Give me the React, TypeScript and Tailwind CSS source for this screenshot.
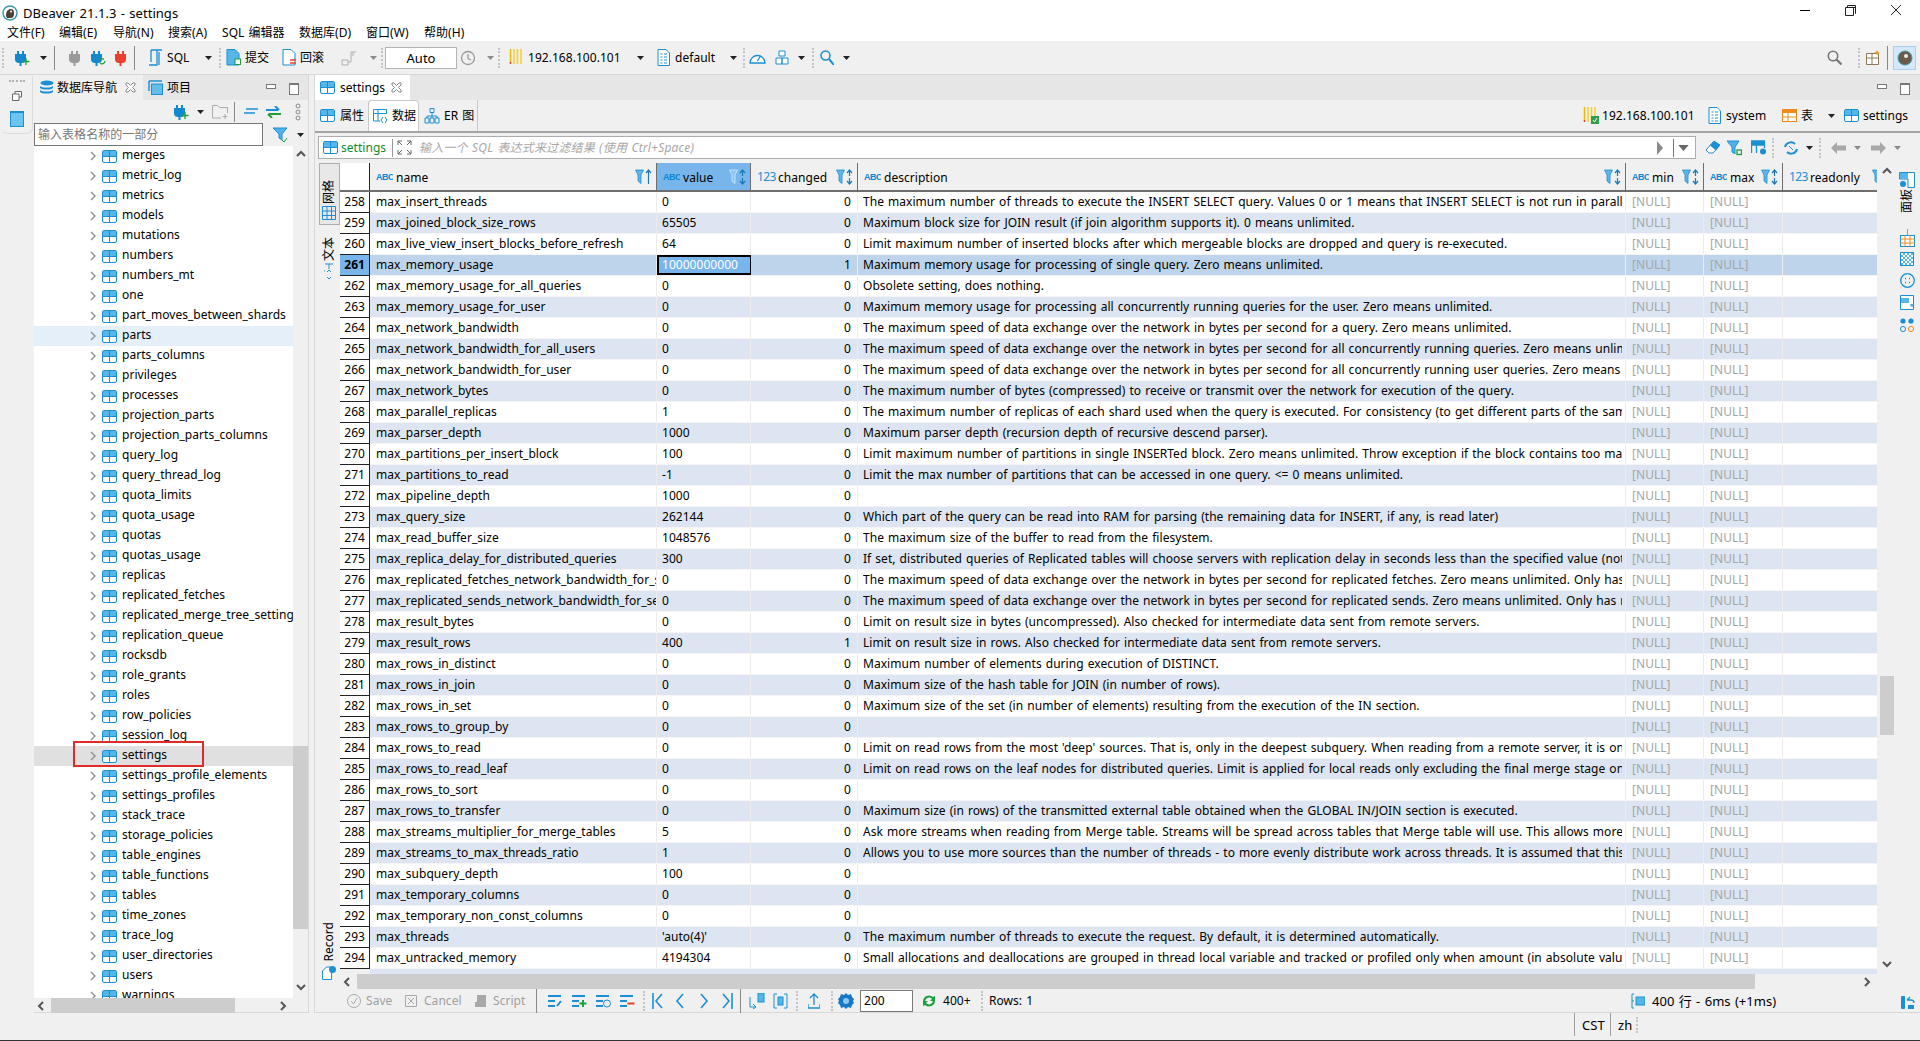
import { ReactNode } from 'react'

const FONT = '[font-family:"Noto_Sans","Noto_Sans_CJK_SC",sans-serif]'

const treeItems = [
  'merges', 'metric_log', 'metrics', 'models', 'mutations', 'numbers', 'numbers_mt', 'one',
  'part_moves_between_shards', 'parts', 'parts_columns', 'privileges', 'processes', 'projection_parts',
  'projection_parts_columns', 'query_log', 'query_thread_log', 'quota_limits', 'quota_usage', 'quotas',
  'quotas_usage', 'replicas', 'replicated_fetches', 'replicated_merge_tree_settings', 'replication_queue',
  'rocksdb', 'role_grants', 'roles', 'row_policies', 'session_log', 'settings', 'settings_profile_elements',
  'settings_profiles', 'stack_trace', 'storage_policies', 'table_engines', 'table_functions', 'tables',
  'time_zones', 'trace_log', 'user_directories', 'users', 'warnings',
]

const net = 'The maximum speed of data exchange over the network in bytes per second for '

const rows: [number, string, string, number, string][] = [
  [258, 'max_insert_threads', '0', 0, 'The maximum number of threads to execute the INSERT SELECT query. Values 0 or 1 means that INSERT SELECT is not run in parallel. Higher values will lead to higher memory usage.'],
  [259, 'max_joined_block_size_rows', '65505', 0, 'Maximum block size for JOIN result (if join algorithm supports it). 0 means unlimited.'],
  [260, 'max_live_view_insert_blocks_before_refresh', '64', 0, 'Limit maximum number of inserted blocks after which mergeable blocks are dropped and query is re-executed.'],
  [261, 'max_memory_usage', '10000000000', 1, 'Maximum memory usage for processing of single query. Zero means unlimited.'],
  [262, 'max_memory_usage_for_all_queries', '0', 0, 'Obsolete setting, does nothing.'],
  [263, 'max_memory_usage_for_user', '0', 0, 'Maximum memory usage for processing all concurrently running queries for the user. Zero means unlimited.'],
  [264, 'max_network_bandwidth', '0', 0, net + 'a query. Zero means unlimited.'],
  [265, 'max_network_bandwidth_for_all_users', '0', 0, net + 'all concurrently running queries. Zero means unlimited.'],
  [266, 'max_network_bandwidth_for_user', '0', 0, net + 'all concurrently running user queries. Zero means unlimited.'],
  [267, 'max_network_bytes', '0', 0, 'The maximum number of bytes (compressed) to receive or transmit over the network for execution of the query.'],
  [268, 'max_parallel_replicas', '1', 0, 'The maximum number of replicas of each shard used when the query is executed. For consistency (to get different parts of the same data split).'],
  [269, 'max_parser_depth', '1000', 0, 'Maximum parser depth (recursion depth of recursive descend parser).'],
  [270, 'max_partitions_per_insert_block', '100', 0, 'Limit maximum number of partitions in single INSERTed block. Zero means unlimited. Throw exception if the block contains too many partitions.'],
  [271, 'max_partitions_to_read', '-1', 0, 'Limit the max number of partitions that can be accessed in one query. <= 0 means unlimited.'],
  [272, 'max_pipeline_depth', '1000', 0, ''],
  [273, 'max_query_size', '262144', 0, 'Which part of the query can be read into RAM for parsing (the remaining data for INSERT, if any, is read later)'],
  [274, 'max_read_buffer_size', '1048576', 0, 'The maximum size of the buffer to read from the filesystem.'],
  [275, 'max_replica_delay_for_distributed_queries', '300', 0, 'If set, distributed queries of Replicated tables will choose servers with replication delay in seconds less than the specified value (not inclusive).'],
  [276, 'max_replicated_fetches_network_bandwidth_for_server', '0', 0, net + 'replicated fetches. Zero means unlimited. Only has meaning at server startup.'],
  [277, 'max_replicated_sends_network_bandwidth_for_server', '0', 0, net + 'replicated sends. Zero means unlimited. Only has meaning at server startup.'],
  [278, 'max_result_bytes', '0', 0, 'Limit on result size in bytes (uncompressed). Also checked for intermediate data sent from remote servers.'],
  [279, 'max_result_rows', '400', 1, 'Limit on result size in rows. Also checked for intermediate data sent from remote servers.'],
  [280, 'max_rows_in_distinct', '0', 0, 'Maximum number of elements during execution of DISTINCT.'],
  [281, 'max_rows_in_join', '0', 0, 'Maximum size of the hash table for JOIN (in number of rows).'],
  [282, 'max_rows_in_set', '0', 0, 'Maximum size of the set (in number of elements) resulting from the execution of the IN section.'],
  [283, 'max_rows_to_group_by', '0', 0, ''],
  [284, 'max_rows_to_read', '0', 0, "Limit on read rows from the most 'deep' sources. That is, only in the deepest subquery. When reading from a remote server, it is only checked on a remote server."],
  [285, 'max_rows_to_read_leaf', '0', 0, 'Limit on read rows on the leaf nodes for distributed queries. Limit is applied for local reads only excluding the final merge stage on the initiator.'],
  [286, 'max_rows_to_sort', '0', 0, ''],
  [287, 'max_rows_to_transfer', '0', 0, 'Maximum size (in rows) of the transmitted external table obtained when the GLOBAL IN/JOIN section is executed.'],
  [288, 'max_streams_multiplier_for_merge_tables', '5', 0, 'Ask more streams when reading from Merge table. Streams will be spread across tables that Merge table will use. This allows more even distribution.'],
  [289, 'max_streams_to_max_threads_ratio', '1', 0, 'Allows you to use more sources than the number of threads - to more evenly distribute work across threads. It is assumed that this is a temporary solution.'],
  [290, 'max_subquery_depth', '100', 0, ''],
  [291, 'max_temporary_columns', '0', 0, ''],
  [292, 'max_temporary_non_const_columns', '0', 0, ''],
  [293, 'max_threads', "'auto(4)'", 0, 'The maximum number of threads to execute the request. By default, it is determined automatically.'],
  [294, 'max_untracked_memory', '4194304', 0, 'Small allocations and deallocations are grouped in thread local variable and tracked or profiled only when amount (in absolute value) becomes larger.'],
]

function Ico({ w = 16, h = 16, className = '', children }: { w?: number; h?: number; className?: string; children: ReactNode }) {
  return (
    <svg width={w} height={h} viewBox={`0 0 ${w} ${h}`} fill="none" className={`shrink-0 ${className}`}>
      {children}
    </svg>
  )
}

function TableIcon({ className = '' }: { className?: string }) {
  return (
    <Ico w={15} h={13} className={className}>
      <rect x="0.5" y="0.5" width="14" height="12" rx="1.5" fill="#fff" stroke="#1b8fd3" />
      <rect x="1" y="1" width="13" height="5" fill="#55b6ea" />
      <path d="M1 6.5h13M7.5 1v11" stroke="#1b8fd3" />
    </Ico>
  )
}

function Caret({ className = '', color = '#222' }: { className?: string; color?: string }) {
  return (
    <Ico w={7} h={4} className={className}>
      <path d="M0 0h7L3.5 4z" fill={color} />
    </Ico>
  )
}

function Grip({ className = '' }: { className?: string }) {
  return <div className={`h-[20px] w-0 shrink-0 border-l-2 border-dotted border-[#c4c4c4] ${className}`} />
}

function Sep({ className = '' }: { className?: string }) {
  return <div className={`h-[24px] w-px shrink-0 bg-[#8a8a8a] ${className}`} />
}

function PlugIcon({ className = '', body = '#1288d0', badge = 'plus' }: { className?: string; body?: string; badge?: string }) {
  return (
    <Ico w={16} h={16} className={className}>
      <path d="M4 1v3M9 1v3" stroke={body} strokeWidth="2" />
      <path d="M1 4h11v5a4 4 0 0 1-4 4H5a4 4 0 0 1-4-4z" fill={body} />
      <path d="M6.5 13v3" stroke={body} strokeWidth="2" />
      {badge === 'plus' && <path d="M12 8v7M8.5 11.500h7" stroke="#1f9e3a" strokeWidth="1.300" />}
      {badge === 'sync' && <path d="M9 11a3 3 0 0 1 5-1.500M15 11a3 3 0 0 1-5 2" stroke="#1f9e3a" strokeWidth="1.300" />}
    </Ico>
  )
}

function DocIcon({ className = '' }: { className?: string }) {
  return (
    <Ico w={13} h={17} className={className}>
      <path d="M1 .5h8l3.500 3.500v12.500H1z" fill="#fff" stroke="#1b8fd3" />
      <path d="M3.500 5h2M7 5h3M3.500 8h2M7 8h3M3.500 11h2M7 11h3M3.500 14h2M7 14h3" stroke="#1b8fd3" />
    </Ico>
  )
}

function ServerIcon({ className = '', check = false }: { className?: string; check?: boolean }) {
  return (
    <Ico w={16} h={17} className={className}>
      <path d="M1.500 0v14" stroke="#f2b705" strokeWidth="1.500" />
      <path d="M1.500 13v2" stroke="#e8432e" strokeWidth="1.500" />
      <path d="M5 0v15M8.500 0v15M12 0v15" stroke="#f7d020" strokeWidth="1.500" />
      {check && <rect x="8" y="9" width="8" height="8" fill="#2e9e4f" />}
      {check && <path d="M10 13l1.500 2 2.500-4" stroke="#fff" />}
    </Ico>
  )
}

function CloseX({ className = '' }: { className?: string }) {
  return (
    <Ico w={11} h={11} className={className}>
      <path d="M1 1h2l2.500 2.500L8 1h2v2L7.500 5.500 10 8v2H8L5.500 7.500 3 10H1V8l2.500-2.500L1 3z" fill="#fff" stroke="#8a8a8a" />
    </Ico>
  )
}

function MinMax({ className = '' }: { className?: string }) {
  return (
    <div className={`flex items-start ${className}`}>
      <div className="mt-[3px] h-[5px] w-[10px] border border-[#777] bg-white" />
      <div className="mt-[2px] ml-[13px] h-[12px] w-[10px] border border-t-2 border-[#777] bg-white" />
    </div>
  )
}

function Funnel({ light = false, className = '' }: { light?: boolean; className?: string }) {
  return (
    <Ico w={9} h={15} className={className}>
      <path d="M.5 1h8L6 6v8.500L3 12V6z" fill={light ? '#8cc4ee' : '#62b4e8'} stroke={light ? '#d8ecfa' : '#1b8fd3'} strokeWidth="0.800" />
    </Ico>
  )
}

function SortIcon({ mode = 'both', className = '' }: { mode?: 'both' | 'up'; className?: string }) {
  return (
    <Ico w={7} h={16} className={className}>
      <path d="M3.500 2v5M1 4l2.500-3L6 4" stroke="#1878b8" strokeWidth="1.200" />
      {mode === 'up' && <path d="M3.500 7v8" stroke="#1878b8" strokeWidth="1.200" />}
      {mode === 'both' && <path d="M3.500 9v5M1 12l2.500 3L6 12" stroke="#1878b8" strokeWidth="1.200" />}
    </Ico>
  )
}

function HeaderCell({ type, label, width, active = false, sort = 'both', iconOffset = 'ml-auto' }: {
  type: 'abc' | 'num'; label: string; width: string; active?: boolean; sort?: 'both' | 'up'; iconOffset?: string
}) {
  return (
    <div className={`flex h-full shrink-0 items-center overflow-hidden border-r border-[#6e6e6e] pl-[6px] ${width} ${active ? 'bg-[#78b5ea]' : 'bg-[#f0f0f0]'}`}>
      {type === 'abc' ? (
        <span className='w-[17px] shrink-0 overflow-hidden text-[9px] font-black tracking-[-0.5px] text-[#0a86d8] [font-family:"Liberation_Sans",sans-serif]'>ABC</span>
      ) : (
        <span className="w-[17px] shrink-0 text-[12px] tracking-[-0.6px] text-[#1b8fd3]">123</span>
      )}
      <span className={`pt-[2px] ${type === 'abc' ? 'ml-[3px]' : 'ml-[4px]'}`}>{label}</span>
      <div className={`flex shrink-0 items-center gap-[1px] pr-[4px] ${iconOffset}`}>
        <Funnel light={active} />
        <SortIcon mode={sort} />
      </div>
    </div>
  )
}

function TreeRow({ name }: { name: string }) {
  const bg = name === 'parts' ? 'bg-[#e4effa]' : name === 'settings' ? 'bg-[#e0e0e0]' : ''
  return (
    <div className={`flex h-[20px] shrink-0 items-center pl-[56px] ${bg}`}>
      <Ico w={6} h={10}>
        <path d="M1 1l4 4-4 4" stroke="#909090" strokeWidth="1.400" />
      </Ico>
      <TableIcon className="ml-[6px]" />
      <span className="ml-[5px] pb-[2px]">{name}</span>
    </div>
  )
}

function DataRow({ row }: { row: [number, string, string, number, string] }) {
  const [num, name, value, changed, desc] = row
  const selected = num === 261
  const bg = selected ? 'bg-[#bdd4eb]' : num % 2 === 1 ? 'bg-[#dce5f1]' : 'bg-white'
  return (
    <div className="flex h-[21px] shrink-0">
      <div className={`w-[30px] shrink-0 border-r border-b border-[#222] pr-[4px] text-right leading-[19px] ${selected ? 'bg-[#78b5ea] font-bold' : 'bg-white'}`}>{num}</div>
      <div className={`flex min-w-0 flex-1 border-b border-[#f4f4f4] leading-[19px] ${bg}`}>
        <div className="w-[287px] shrink-0 overflow-hidden border-r border-[#ececec] pl-[6px]">{name}</div>
        <div className={`w-[94px] shrink-0 border-r border-[#ececec] pl-[5px] ${selected ? 'border-2 border-black bg-[#78b5ea] !pl-[3px] leading-[16px] text-white' : ''}`}>{value}</div>
        <div className="w-[107px] shrink-0 border-r border-[#ececec] pr-[6px] text-right">{changed}</div>
        <div className="w-[768px] shrink-0 border-r border-[#ececec] pr-[3px] pl-[5px]">
          <div className="overflow-hidden">{desc}</div>
        </div>
        <div className="w-[78px] shrink-0 border-r border-[#ececec] pl-[6px] text-[#a6a6a6]">[NULL]</div>
        <div className="w-[79px] shrink-0 border-r border-[#ececec] pl-[6px] text-[#a6a6a6]">[NULL]</div>
        <div className="flex-1" />
      </div>
    </div>
  )
}

function ScrollArrow({ dir, className = '' }: { dir: 'up' | 'down' | 'left' | 'right'; className?: string }) {
  const d = { up: 'M1 6l4-4 4 4', down: 'M1 2l4 4 4-4', left: 'M6 1L2 5l4 4', right: 'M2 1l4 4-4 4' }[dir]
  return (
    <Ico w={10} h={10} className={className}>
      <path d={d} stroke="#555" strokeWidth="2" />
    </Ico>
  )
}

function ListIcon({ badge, className = '' }: { badge: 'edit' | 'plus' | 'copy' | 'minus'; className?: string }) {
  return (
    <Ico w={16} h={14} className={className}>
      <path d="M1 2h13M1 7h7M1 12h7" stroke="#1b8fd3" strokeWidth="2" />
      {badge === 'edit' && <path d="M10 12l4-5" stroke="#1b8fd3" strokeWidth="2" />}
      {badge === 'plus' && <path d="M12 6v7M8.500 9.500h7" stroke="#1f9e3a" strokeWidth="2" />}
      {badge === 'copy' && <circle cx="12" cy="9.500" r="3.500" stroke="#1b8fd3" />}
      {badge === 'minus' && <path d="M8.500 9.500h7" stroke="#e8402e" strokeWidth="2" />}
    </Ico>
  )
}

export default function App() {
  return (
    <div className={`flex h-[1041px] w-[1920px] flex-col overflow-hidden bg-[#f0f0f0] text-[12px] leading-[16px] tracking-[0.04px] whitespace-nowrap text-black [word-spacing:0.9px] ${FONT}`}>
      {/* title + menu */}
      <div className="h-[41px] shrink-0 bg-white">
        <div className="flex h-[25px] items-center pl-[2px]">
          <Ico w={16} h={16}>
            <circle cx="8" cy="8" r="7" fill="#fff" stroke="#3f9aa8" strokeWidth="1.500" />
            <path d="M4 11c0-5 2-7 5-7s3 3 3 5-1 4-3 4H5z" fill="#4a4038" />
            <circle cx="9" cy="6.500" r="1" fill="#fff" />
          </Ico>
          <span className="ml-[5px] text-[13px]">DBeaver 21.1.3 - settings</span>
          <div className="-mt-[5px] ml-auto flex items-center">
            <div className="h-px w-[10px] bg-black" />
            <Ico w={11} h={11} className="ml-[35px]">
              <path d="M2.500 2.500h8v6M.5 2.500h8v8h-8zM2.500 2.500V.5h8v8" stroke="#222" fill="none" />
            </Ico>
            <Ico w={12} h={12} className="mr-[18px] ml-[34px]">
              <path d="M1 1l10 10M11 1L1 11" stroke="#222" />
            </Ico>
          </div>
        </div>
        <div className="flex h-[16px] items-center pl-[7px]">
          <span className="w-[52px]">文件(F)</span>
          <span className="w-[54px]">编辑(E)</span>
          <span className="w-[55px]">导航(N)</span>
          <span className="w-[54px]">搜索(A)</span>
          <span className="w-[77px]">SQL 编辑器</span>
          <span className="w-[67px]">数据库(D)</span>
          <span className="w-[58px]">窗口(W)</span>
          <span>帮助(H)</span>
        </div>
      </div>

      {/* main toolbar */}
      <div className="flex h-[34px] shrink-0 items-center border-b border-[#d8d8d8] pl-[2px]">
        <Grip />
        <PlugIcon className="ml-[10px]" />
        <Caret className="ml-[10px]" />
        <Sep className="ml-[7px]" />
        <PlugIcon body="#9a9a9a" badge="none" className="ml-[13px]" />
        <PlugIcon badge="sync" className="ml-[6px]" />
        <PlugIcon body="#e8402e" badge="none" className="ml-[8px]" />
        <Sep className="ml-[4px]" />
        <Ico w={15} h={18} className="ml-[13px]">
          <path d="M3 1h11M9 1v15H1M3 1v12M11 3v13" stroke="#1b8fd3" strokeWidth="1.300" />
        </Ico>
        <span className="ml-[4px] w-[38px]">SQL</span>
        <Caret />
        <Grip className="ml-[7px]" />
        <Ico w={15} h={17} className="ml-[5px]">
          <path d="M1 .5h8l4 4V16H1z" fill="#55b6ea" stroke="#1b8fd3" />
          <rect x="9" y="10" width="5.500" height="5.500" fill="#fff" stroke="#1f9e3a" />
        </Ico>
        <span className="ml-[4px] w-[25px]">提交</span>
        <Ico w={15} h={17} className="ml-[12px]">
          <path d="M1 .5h8l4 4V16H1z" fill="#fff" stroke="#1b8fd3" />
          <path d="M8 11h6M8 14h6" stroke="#e8402e" strokeWidth="1.300" />
        </Ico>
        <span className="ml-[3px] w-[25px]">回滚</span>
        <Ico w={16} h={16} className="ml-[16px]">
          <path d="M1 10h6v5H1zM7 12h3V2h5M12 2v4" stroke="#b0b0b0" />
        </Ico>
        <Caret color="#8a8a8a" className="ml-[13px]" />
        <Grip className="ml-[4px]" />
        <div className="ml-[2px] flex h-[22px] w-[72px] shrink-0 items-center justify-center border border-[#b4b4b4] bg-white text-[13px]">Auto</div>
        <Ico w={16} h={16} className="ml-[3px]">
          <circle cx="8" cy="8" r="6.500" stroke="#9a9a9a" strokeWidth="1.300" />
          <path d="M8 4v4.500l3 1.500" stroke="#9a9a9a" strokeWidth="1.300" />
        </Ico>
        <Caret color="#8a8a8a" className="ml-[11px]" />
        <Grip className="ml-[4px]" />
        <ServerIcon className="ml-[9px]" />
        <span className="ml-[3px] w-[109px]">192.168.100.101</span>
        <Caret />
        <DocIcon className="ml-[13px]" />
        <span className="ml-[5px] w-[55px]">default</span>
        <Caret />
        <Grip className="ml-[6px]" />
        <Ico w={17} h={15} className="ml-[4px]">
          <path d="M1 13a7.500 7.500 0 1 1 15 0z" fill="#fff" stroke="#1b8fd3" strokeWidth="1.300" />
          <path d="M8.500 11l3-5" stroke="#1b8fd3" strokeWidth="1.300" />
        </Ico>
        <Ico w={14} h={15} className="ml-[9px]">
          <path d="M4 1h6v5H4zM1 8h6v6H1zM7 8h6v6H7z" stroke="#1b8fd3" fill="#fff" />
        </Ico>
        <Caret className="ml-[9px]" />
        <Grip className="ml-[7px]" />
        <Ico w={14} h={15} className="ml-[6px]">
          <circle cx="5.500" cy="5.500" r="4.500" stroke="#1b8fd3" strokeWidth="1.500" />
          <path d="M9 9l5 6" stroke="#1b8fd3" strokeWidth="2" />
        </Ico>
        <Caret className="ml-[9px]" />
        <Ico w={15} h={15} className="ml-auto">
          <circle cx="6" cy="6" r="4.700" stroke="#777" strokeWidth="1.600" />
          <path d="M9.500 9.500l5 5" stroke="#777" strokeWidth="2.200" />
        </Ico>
        <Grip className="ml-[16px]" />
        <Ico w={14} h={15} className="ml-[6px]">
          <path d="M.5 3.500h12v11H.5zM.5 8h12M6 3.500v11" stroke="#8a7a55" fill="#fff" />
          <path d="M11 0l1 2 2 .5-2 1-1 2-1-2-2-1 2-.5z" fill="#e8a020" />
        </Ico>
        <Sep className="ml-[7px]" />
        <div className="mr-[4px] ml-[5px] flex h-[24px] w-[23px] shrink-0 items-center justify-center border border-[#a8d0f0] bg-[#d4e8fa]">
          <Ico w={16} h={16}>
            <circle cx="8" cy="8" r="7" fill="#6b5a4a" stroke="#3f9aa8" />
            <circle cx="9" cy="6" r="2" fill="#eee" />
          </Ico>
        </div>
      </div>

      <div className="flex h-[938px] shrink-0">
        {/* left trim */}
        <div className="w-[34px] shrink-0 pt-[1px] pl-[2px]">
          <div className="flex h-[58px] w-[31px] flex-col items-center rounded-b-[6px] border-r border-b border-[#dcdcdc]">
            <div className="mt-[4px] h-0 w-[16px] border-t-2 border-dotted border-[#b0b0b0]" />
            <Ico w={10} h={10} className="mt-[9px]">
              <path d="M3 3V.5h6.500V6H7M.5 3h6.500v6.500H.5z" stroke="#666" fill="#fff" />
            </Ico>
            <div className="mt-[10px] h-[16px] w-[14px] border border-t-2 border-[#1b8fd3] bg-[#6cc4f0]" />
          </div>
        </div>

        {/* navigator */}
        <div className="flex w-[275px] shrink-0 flex-col border-r border-b border-[#d8d8d8]">
          <div className="flex h-[25px] shrink-0 items-center bg-[#e6e6e6]">
            <div className="flex h-full w-[109px] shrink-0 items-center bg-[#f0f0f0] pl-[5px]">
              <Ico w={15} h={15}>
                <ellipse cx="8" cy="3" rx="6.500" ry="2.500" fill="#1b8fd3" />
                <path d="M1 6c2 2 11 2 13 0v2c-2 2-11 2-13 0zM1 10c2 2 11 2 13 0v2c-2 2-11 2-13 0z" fill="#1b8fd3" />
              </Ico>
              <span className="ml-[3px] w-[61px]">数据库导航</span>
              <CloseX className="ml-[7px]" />
            </div>
            <Ico w={15} h={15} className="ml-[5px]">
              <path d="M1 1h13" stroke="#1b8fd3" strokeWidth="1.500" />
              <rect x="3.500" y="4" width="11" height="10.500" fill="#62bdee" stroke="#1b8fd3" />
              <path d="M1 1v10" stroke="#1b8fd3" strokeWidth="1.500" />
            </Ico>
            <span className="ml-[4px] w-[24px]">项目</span>
            <MinMax className="ml-[75px]" />
          </div>
          <div className="flex h-[23px] shrink-0 items-center">
            <PlugIcon className="ml-[139px]" />
            <Caret className="ml-[8px]" />
            <Ico w={17} h={15} className="ml-[8px]">
              <path d="M.5 14V1.500h5l2 2h8V9M.5 14H9" stroke="#aaa" />
              <path d="M13 10v5M10.500 12.500h5" stroke="#aaa" />
            </Ico>
            <Sep className="ml-[5px] !h-[20px]" />
            <Ico w={14} h={7} className="ml-[9px]">
              <path d="M2 1h12M0 5h11" stroke="#1b8fd3" strokeWidth="1.500" />
            </Ico>
            <Ico w={15} h={12} className="ml-[8px]">
              <path d="M0 4h12M9 0l4 4" stroke="#1b8fd3" strokeWidth="2" />
              <path d="M15 8H3M6 12L2 8" stroke="#1f9e3a" strokeWidth="2" />
            </Ico>
            <Ico w={6} h={18} className="ml-[14px]">
              <circle cx="3" cy="3" r="2" stroke="#888" />
              <circle cx="3" cy="9" r="2" stroke="#888" />
              <circle cx="3" cy="15" r="2" stroke="#888" />
            </Ico>
          </div>
          <div className="flex h-[23px] shrink-0 items-center">
            <div className="flex h-full w-[229px] shrink-0 items-center border border-[#767676] bg-white pl-[3px] text-[#777]">输入表格名称的一部分</div>
            <Ico w={15} h={16} className="ml-[10px]">
              <path d="M0 1h14L9 7v6L6 11V7z" fill="#4fb2e8" stroke="#1b8fd3" />
              <path d="M9 13l2 2 3-4" stroke="#1f9e3a" />
            </Ico>
            <Caret className="ml-[9px]" />
          </div>
          <div className="relative flex h-[852px] shrink-0">
            <div className="flex w-[259px] shrink-0 flex-col overflow-hidden bg-white">
              {treeItems.map((t) => (
                <TreeRow key={t} name={t} />
              ))}
            </div>
            <div className="flex flex-1 flex-col items-center pt-[4px]">
              <ScrollArrow dir="up" />
              <div className="mt-[586px] h-[183px] w-full shrink-0 bg-[#cdcdcd]" />
              <ScrollArrow dir="down" className="mt-[54px]" />
            </div>
            {/* annotation around the selected table */}
            <div className="absolute top-[595px] left-[39px] h-[26px] w-[131px] border-2 border-[#e02b2b]" />
          </div>
          <div className="flex h-[15px] shrink-0 items-center">
            <ScrollArrow dir="left" className="ml-[3px]" />
            <div className="ml-[4px] h-full w-[184px] bg-[#cdcdcd]" />
            <ScrollArrow dir="right" className="ml-[44px]" />
          </div>
        </div>

        {/* editor */}
        <div className="ml-[5px] flex min-w-0 flex-1 flex-col border-b border-l border-[#d8d8d8]">
          <div className="flex h-[25px] shrink-0 items-center bg-[#e6e6e6]">
            <div className="flex h-full w-[95px] shrink-0 items-center bg-white pl-[5px]">
              <TableIcon />
              <span className="ml-[5px] w-[44px]">settings</span>
              <CloseX className="ml-[7px]" />
            </div>
            <MinMax className="mr-[10px] ml-auto" />
          </div>
          <div className="flex h-[33px] shrink-0 items-end border-b-2 border-[#a4a4a4]">
            <div className="flex h-[31px] w-[53px] shrink-0 items-center pl-[5px]">
              <TableIcon />
              <span className="ml-[5px]">属性</span>
            </div>
            <div className="flex h-[31px] w-[51px] shrink-0 items-center rounded-t-[4px] border border-b-0 border-[#c8c8c8] bg-white pl-[4px]">
              <Ico w={15} h={14}>
                <path d="M.5 12V.5h13V5M.5 4.500h13M5 .5V12M.5 12H7" stroke="#1b8fd3" />
                <path d="M10 8l-2 3 2 3M12 8l2 3-2 3" stroke="#1b8fd3" />
              </Ico>
              <span className="ml-[4px]">数据</span>
            </div>
            <div className="flex h-[31px] w-[59px] shrink-0 items-center border-r border-[#c8c8c8] pl-[5px]">
              <Ico w={16} h={16}>
                <path d="M6 .5h4v4H6zM1 10h4v5H1zM6 10h4v5H6zM11 10h4v5h-4zM8 5v3M3 10V8h10v2M8 8v2" stroke="#1b8fd3" />
              </Ico>
              <span className="ml-[4px]">ER 图</span>
            </div>
            <div className="ml-auto flex h-[31px] items-center pr-[11px]">
              <ServerIcon check />
              <span className="ml-[3px] w-[106px]">192.168.100.101</span>
              <DocIcon />
              <span className="ml-[5px] w-[56px]">system</span>
              <Ico w={15} h={13}>
                <rect x="0.500" y="0.500" width="14" height="12" fill="#fff" stroke="#f08a1e" />
                <rect x="1" y="1" width="13" height="3" fill="#f08a1e" />
                <path d="M1 8h13M6 4v8" stroke="#f08a1e" />
              </Ico>
              <span className="ml-[4px] w-[27px]">表</span>
              <Caret />
              <TableIcon className="ml-[9px]" />
              <span className="ml-[4px] w-[46px]">settings</span>
            </div>
          </div>

          {/* filter bar */}
          <div className="mt-[3px] flex h-[23px] shrink-0 items-center pl-[3px]">
            <div className="flex h-full w-[1378px] shrink-0 items-center border border-[#adadad] bg-white pl-[4px]">
              <TableIcon />
              <span className="ml-[3px] w-[44px] text-[#128a2a]">settings</span>
              <div className="ml-[7px] h-[18px] w-px bg-[#999]" />
              <Ico w={15} h={15} className="ml-[4px]">
                <path d="M1 5V1h4M1 1l4 4M14 5V1h-4M14 1l-4 4M1 10v4h4M1 14l4-4M14 10v4h-4M14 14l-4-4" stroke="#666" />
              </Ico>
              <span className="ml-[7px] tracking-[0.2px] text-[#a8a8a8] italic">输入一个 SQL 表达式来过滤结果 (使用 Ctrl+Space)</span>
              <Ico w={8} h={14} className="ml-auto">
                <path d="M1 0l6 7-6 7z" fill="#8a8a8a" />
              </Ico>
              <div className="ml-[9px] h-[18px] w-px bg-[#777]" />
              <Caret color="#666" className="mr-[8px] ml-[6px] scale-150" />
            </div>
            <Ico w={16} h={15} className="ml-[9px]">
              <path d="M1 10l8-9 6 4-7 8H4z" fill="#fff" stroke="#1b8fd3" />
              <path d="M5 5.500l6 5L15 5 9 1z" fill="#1b8fd3" />
            </Ico>
            <Ico w={15} h={16} className="ml-[6px]">
              <path d="M0 1h12L8 7v7L5 12V7z" fill="#4fb2e8" stroke="#1b8fd3" />
              <rect x="10" y="10" width="4.500" height="4.500" stroke="#1f9e3a" strokeWidth="1.300" />
            </Ico>
            <Ico w={16} h={15} className="ml-[9px]">
              <path d="M.5 13V1h13v7M.5 5h13M5.500 5v8" stroke="#1b8fd3" strokeWidth="1.300" />
              <rect x="1" y="1" width="12" height="4" fill="#1b8fd3" />
              <circle cx="12" cy="11.500" r="3" fill="#1b8fd3" />
            </Ico>
            <Grip className="ml-[5px]" />
            <Ico w={16} h={16} className="ml-[9px]">
              <path d="M2 7a6 6 0 0 1 10-3M14 9a6 6 0 0 1-10 3" stroke="#1b8fd3" strokeWidth="2" />
              <path d="M6 6l4 4" stroke="#1b8fd3" />
            </Ico>
            <Caret className="ml-[7px]" />
            <Grip className="ml-[6px]" />
            <Ico w={15} h={12} className="ml-[10px]">
              <path d="M0 6l6-6v3.500h9v5H6V12z" fill="#a8a8a8" />
            </Ico>
            <Caret color="#8a8a8a" className="ml-[8px]" />
            <Ico w={15} h={12} className="ml-[10px]">
              <path d="M15 6L9 0v3.500H0v5h9V12z" fill="#a8a8a8" />
            </Ico>
            <Caret color="#8a8a8a" className="ml-[8px]" />
          </div>

          {/* results */}
          <div className="mt-[4px] flex min-h-0 flex-1">
            <div className="flex w-[25px] shrink-0 flex-col items-center pl-[3px]">
              <div className="flex h-[62px] w-[21px] shrink-0 flex-col items-center justify-end gap-[2px] border border-[#adadad] bg-[#e8e8e8] pb-[4px]">
                <span className="rotate-180 [text-orientation:sideways] [writing-mode:vertical-rl]">网格</span>
                <Ico w={14} h={14}>
                  <path d="M.5.5h13v13H.5zM.5 5h13M.5 9.500h13M5 .5v13M9.500.5v13" stroke="#1b8fd3" />
                </Ico>
              </div>
              <span className="mt-[12px] rotate-180 [text-orientation:sideways] [writing-mode:vertical-rl]">文本</span>
              <Ico w={10} h={16} className="mt-[2px]">
                <path d="M1 1h8M5 1v5M1 8H0M3 14l2 2 2-2M3 9l2-2 2 2" stroke="#1b8fd3" />
              </Ico>
              <span className="mt-auto rotate-180 [text-orientation:sideways] [writing-mode:vertical-rl]">Record</span>
              <Ico w={14} h={14} className="mt-[4px] mb-[32px]">
                <path d="M.5 13.500V5l4-4h5v12.500z" fill="#fff" stroke="#1b8fd3" />
                <circle cx="10.500" cy="3.500" r="3.500" fill="#1b8fd3" />
              </Ico>
            </div>

            <div className="flex w-[1537px] shrink-0 flex-col">
              <div className="flex h-[29px] shrink-0 border-b-2 border-[#6e6e6e]">
                <div className="w-[30px] shrink-0 border-r border-[#222] bg-white" />
                <HeaderCell type="abc" label="name" width="w-[287px]" sort="up" />
                <HeaderCell type="abc" label="value" width="w-[94px]" active />
                <HeaderCell type="num" label="changed" width="w-[107px]" />
                <HeaderCell type="abc" label="description" width="w-[768px]" />
                <HeaderCell type="abc" label="min" width="w-[78px]" />
                <HeaderCell type="abc" label="max" width="w-[79px]" />
                <HeaderCell type="num" label="readonly" width="flex-1 border-r-0" iconOffset="ml-[12px]" />
              </div>
              <div className="flex h-[782px] shrink-0 flex-col overflow-hidden">
                {rows.map((r) => (
                  <DataRow key={r[0]} row={r} />
                ))}
                <div className="ml-[30px] h-[21px] shrink-0 bg-[#dce5f1]" />
              </div>
              <div className="flex h-[15px] shrink-0 items-center">
                <ScrollArrow dir="left" className="ml-[3px]" />
                <div className="ml-[4px] h-full w-[1398px] bg-[#cdcdcd]" />
                <ScrollArrow dir="right" className="ml-[108px]" />
              </div>
              <div className="flex h-[24px] shrink-0 items-center pl-[7px] text-[#a0a0a0]">
                <Ico w={14} h={14}>
                  <circle cx="7" cy="7" r="6.500" stroke="#a8a8a8" />
                  <path d="M4 7l2.500 3L10 4" stroke="#a8a8a8" />
                </Ico>
                <span className="ml-[5px] w-[39px]">Save</span>
                <Ico w={12} h={12}>
                  <path d="M.5.5h11v11H.5zM3 3l6 6M9 3L3 9" stroke="#a8a8a8" />
                </Ico>
                <span className="ml-[7px] w-[50px]">Cancel</span>
                <Ico w={13} h={15}>
                  <path d="M3 1h9v12H1V8h2z" fill="#a8a8a8" />
                </Ico>
                <span className="ml-[6px] w-[43px]">Script</span>
                <Sep />
                <ListIcon badge="edit" className="ml-[10px]" />
                <ListIcon badge="plus" className="ml-[8px]" />
                <ListIcon badge="copy" className="ml-[8px]" />
                <ListIcon badge="minus" className="ml-[8px]" />
                <Grip className="ml-[8px]" />
                <Ico w={12} h={16} className="ml-[7px]">
                  <path d="M1 0v16M10 1L4 8l6 7" stroke="#1b8fd3" strokeWidth="1.600" />
                </Ico>
                <Ico w={9} h={16} className="ml-[11px]">
                  <path d="M8 1L2 8l6 7" stroke="#1b8fd3" strokeWidth="1.600" />
                </Ico>
                <Ico w={9} h={16} className="ml-[16px]">
                  <path d="M1 1l6 7-6 7" stroke="#1b8fd3" strokeWidth="1.600" />
                </Ico>
                <Ico w={12} h={16} className="ml-[12px]">
                  <path d="M11 0v16M2 1l6 7-6 7" stroke="#1b8fd3" strokeWidth="1.600" />
                </Ico>
                <Sep className="ml-[7px]" />
                <Ico w={16} h={16} className="ml-[8px]">
                  <path d="M1 4v10h5M4 11l3 3-3 2" stroke="#1b8fd3" />
                  <rect x="9" y="0" width="6" height="9" fill="#55b6ea" stroke="#1b8fd3" />
                </Ico>
                <Ico w={15} h={16} className="ml-[8px]">
                  <path d="M4 1H1v14h3M11 1h3v14h-3" stroke="#1b8fd3" />
                  <rect x="5" y="4" width="5" height="8" fill="#55b6ea" stroke="#1b8fd3" />
                </Ico>
                <Grip className="ml-[8px]" />
                <Ico w={12} h={16} className="ml-[10px]">
                  <path d="M6 12V1M2 5l4-4 4 4M0 11v4h12v-4" stroke="#1b8fd3" strokeWidth="1.300" />
                </Ico>
                <Grip className="ml-[11px]" />
                <Ico w={16} h={16} className="ml-[5px]">
                  <path d="M8 0l2 2 3-1 1 3 2 2-1 2 1 2-2 2-1 3-3-1-2 2-2-2-3 1-1-3-2-2 1-2-1-2 2-2 1-3 3 1z" fill="#1878c8" />
                  <circle cx="8" cy="8" r="3" fill="#8cc8f0" />
                </Ico>
                <div className="ml-[6px] flex h-[22px] w-[53px] shrink-0 items-center border border-[#7a7a7a] bg-white pl-[3px] text-black">200</div>
                <Ico w={16} h={16} className="ml-[8px]">
                  <path d="M2 8a6 6 0 0 1 10-4l2-1v5H9l2-2a4 4 0 0 0-7 2zM14 8a6 6 0 0 1-10 4l-2 1V8h5l-2 2a4 4 0 0 0 7-2z" fill="#19a03c" />
                </Ico>
                <span className="ml-[6px] w-[31px] text-black">400+</span>
                <Grip className="ml-[7px]" />
                <span className="ml-[6px] w-[642px] text-black">Rows: 1</span>
                <Ico w={14} h={16}>
                  <path d="M3 1H1v14h2M1 8h2" stroke="#1b8fd3" />
                  <rect x="5" y="4" width="9" height="8" fill="#55b6ea" stroke="#1b8fd3" />
                </Ico>
                <span className="ml-[7px] text-[13px] text-black">400 行 - 6ms (+1ms)</span>
              </div>
            </div>

            <div className="flex w-[20px] shrink-0 flex-col items-center pt-[4px]">
              <ScrollArrow dir="up" />
              <div className="mt-[499px] h-[59px] w-[14px] shrink-0 bg-[#cdcdcd]" />
              <ScrollArrow dir="down" className="mt-[225px]" />
            </div>

            <div className="flex flex-1 flex-col items-center pt-[9px] pr-[3px]">
              <Ico w={16} h={16}>
                <path d="M.5.5h15v15H9V7H.5z" fill="#fff" stroke="#1b8fd3" />
                <rect x="1" y="1" width="8" height="6" fill="#55b6ea" />
                <circle cx="4" cy="12" r="3" fill="#1b8fd3" />
              </Ico>
              <span className="mt-[1px] rotate-180 [text-orientation:sideways] [writing-mode:vertical-rl]">面板</span>
              <Ico w={15} h={18} className="mt-[16px]">
                <rect x=".5" y="6.500" width="14" height="11" fill="#fff" stroke="#1b8fd3" />
                <path d="M.5 10h14M.5 14h14M5 6.500v11M10 6.500v11" stroke="#f08a1e" />
                <path d="M7.500 0v6" stroke="#f08a1e" />
              </Ico>
              <div className="mt-[5px] h-[14px] w-[14px] border border-[#1b8fd3] bg-[repeating-conic-gradient(#55b6ea_0_25%,#fff_0_50%)] bg-[length:4px_4px]" />
              <Ico w={15} h={15} className="mt-[7px]">
                <circle cx="7.500" cy="7.500" r="6.800" stroke="#1b8fd3" strokeWidth="1.300" />
                <path d="M5 5.500h1M9 5.500h1M5 9.500h1M9 9.500h1" stroke="#1b8fd3" strokeWidth="1.500" />
              </Ico>
              <Ico w={15} h={15} className="mt-[7px]">
                <path d="M.5 14.500V.5h13v14z" fill="#fff" stroke="#1b8fd3" />
                <rect x="1" y="3" width="8" height="5" fill="#55b6ea" />
                <path d="M10 10h4M12 9v3" stroke="#1b8fd3" />
              </Ico>
              <Ico w={14} h={14} className="mt-[8px]">
                <circle cx="3" cy="3" r="2.600" fill="#1b8fd3" />
                <circle cx="11" cy="3" r="2.600" fill="#1b8fd3" />
                <circle cx="3" cy="11" r="2.600" stroke="#1b8fd3" />
                <circle cx="11" cy="11" r="2.600" stroke="#f08a1e" />
              </Ico>
              <Ico w={15} h={15} className="mt-auto mb-[2px]">
                <rect x="1" y="1" width="4" height="13" rx="1" fill="#1b8fd3" />
                <rect x="8" y="10" width="6" height="4" fill="#1b8fd3" />
                <path d="M7 5h4a3 3 0 0 1 3 3M7 5l3-3" stroke="#1b8fd3" strokeWidth="1.300" />
              </Ico>
            </div>
          </div>
        </div>
      </div>

      {/* status bar */}
      <div className="flex h-[23px] shrink-0 items-center text-[13px]">
        <div className="ml-[1574px] h-full w-px bg-[#a0a0a0]" />
        <span className="ml-[7px] w-[21px]">CST</span>
        <div className="ml-[7px] h-full w-px bg-[#a0a0a0]" />
        <span className="ml-[7px] w-[13px]">zh</span>
        <Grip className="ml-[5px] !h-[16px]" />
      </div>
      <div className="mt-auto h-px shrink-0 bg-[#333]" />
    </div>
  )
}
